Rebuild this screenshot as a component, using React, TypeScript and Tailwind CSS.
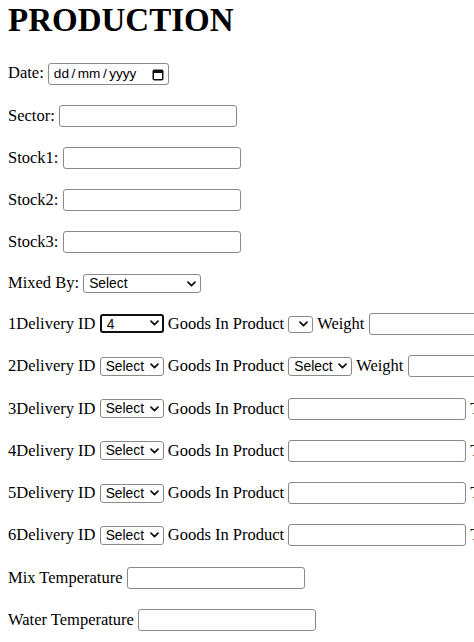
import React from "react";

const inputCls =
  "inline-block h-[22px] w-[178px] border border-[#8a8a8a] rounded-[3px] px-[3px] bg-white align-baseline font-['Liberation_Sans',Arial,sans-serif] text-[13.33px] outline-none";

function Chevron() {
  return (
    <svg
      width="9"
      height="6"
      viewBox="0 0 9 6"
      className="pointer-events-none absolute right-[5px] top-1/2 -translate-y-1/2"
    >
      <path d="M1 1.2l3.5 3.4L8 1.2" fill="none" stroke="#111" strokeWidth="1.7" strokeLinecap="round" strokeLinejoin="round" />
    </svg>
  );
}

function Sel({
  w,
  h = 19,
  value,
  focus = false,
  pl = "pl-[5px]",
}: {
  w: string;
  h?: number;
  value: string;
  focus?: boolean;
  pl?: string;
}) {
  const size = h === 19 ? "h-[19px] leading-[17px]" : "h-[17px] leading-[15px]";
  const border = focus
    ? "border-2 border-[#101010] rounded-[3px]"
    : "border border-[#8a8a8a] rounded-[3px]";
  return (
    <span className="relative inline-block align-baseline leading-none text-[13.8px] font-['Liberation_Sans',Arial,sans-serif]">
      <select
        defaultValue={value}
        className={`${w} ${size} ${border} ${pl} appearance-none bg-white py-0 font-['Liberation_Sans',Arial,sans-serif] text-[13.8px] text-black outline-none`}
      >
        <option value={value}>{value}</option>
      </select>
      <Chevron />
    </span>
  );
}

function DateField() {
  return (
    <span className="inline-flex h-[22px] w-[121px] items-center rounded-[3px] border border-[#8a8a8a] bg-white pl-[5px] pr-[4px] align-baseline font-['Liberation_Sans',Arial,sans-serif] text-[13.6px] leading-[15.6px]">
      <span>
        dd<span className="mx-[2.5px]">/</span>mm<span className="mx-[2.5px]">/</span>yyyy
      </span>
      <svg width="12" height="13" viewBox="0 0 12 13" className="ml-auto">
        <rect x="1.25" y="2.25" width="9.5" height="9.5" rx="1" fill="none" stroke="#111" strokeWidth="1.5" />
        <rect x="1" y="2" width="10" height="3" fill="#111" />
      </svg>
    </span>
  );
}

export default function App() {
  const rowA = "h-[42px] whitespace-nowrap leading-[19px]";
  const rowB = "h-[42.3px] whitespace-nowrap leading-[19px]";
  return (
    <div className="h-[642px] w-[474px] overflow-hidden bg-white px-[8px] font-['Liberation_Serif','Times_New_Roman',serif] text-[16.5px] text-black">
      <h1 className="box-border h-[63px] pt-[1px] text-[33px] font-bold leading-[38px]">PRODUCTION</h1>

      <div className={rowA}>
        Date: <DateField />
      </div>
      <div className={rowA}>
        Sector: <input className={inputCls} />
      </div>
      <div className={rowA}>
        Stock1: <input className={inputCls} />
      </div>
      <div className={rowA}>
        Stock2: <input className={inputCls} />
      </div>
      <div className={rowA}>
        Stock3: <input className={inputCls} />
      </div>
      <div className="h-[40px] whitespace-nowrap leading-[19px]">
        Mixed By: <Sel w="w-[118px]" value="Select" pl="pl-[5px]" />
      </div>
      <div className={rowB}>
        1Delivery ID <Sel w="w-[64px]" value="4" focus /> Goods In Product{" "}
        <Sel w="w-[25px]" h={17} value="" /> Weight <input className={inputCls} />
      </div>
      <div className={rowB}>
        2Delivery ID <Sel w="w-[64px]" value="Select" /> Goods In Product{" "}
        <Sel w="w-[64px]" value="Select" /> Weight <input className={inputCls} />
      </div>
      {[3, 4, 5, 6].map((n) => (
        <div key={n} className={rowB}>
          {n}Delivery ID <Sel w="w-[64px]" value="Select" /> Goods In Product{" "}
          <input className={inputCls} /> Total Weight
        </div>
      ))}
      <div className={rowB}>
        Mix Temperature <input className={inputCls} />
      </div>
      <div className={rowB}>
        Water Temperature <input className={inputCls} />
      </div>
    </div>
  );
}
